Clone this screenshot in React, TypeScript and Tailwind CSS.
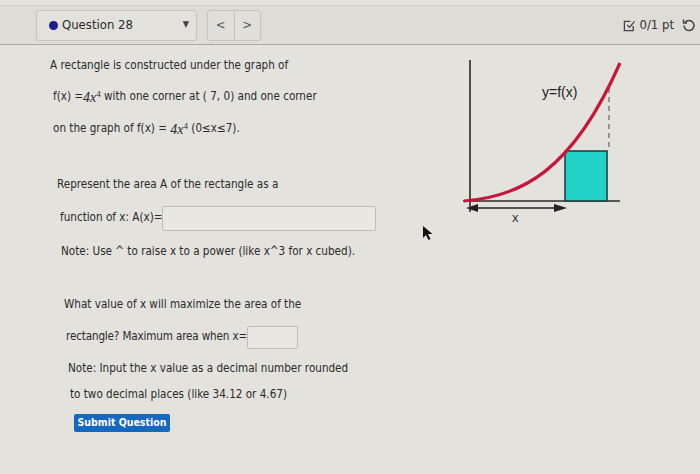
const font = "font-['DejaVu_Sans_Condensed','Liberation_Sans_Narrow','Liberation_Sans',sans-serif]";

function Graph() {
  return (
    <svg width="180" height="175" viewBox="0 0 180 175" className="shrink-0">
      {/* axes */}
      <line x1="20" y1="0" x2="20" y2="152" stroke="#2a2a2a" strokeWidth="1.6" />
      <line x1="13" y1="141" x2="170" y2="141" stroke="#2a2a2a" strokeWidth="1.4" />
      {/* rectangle */}
      <rect x="115" y="91" width="42" height="50" fill="#20d3c6" stroke="#1c3a3a" strokeWidth="1.5" />
      <line x1="159" y1="28" x2="159" y2="91" stroke="#444" strokeWidth="1" strokeDasharray="5 4" />
      {/* curve */}
      <path d="M14 141 C 70 137, 122 112, 170 3" fill="none" stroke="#c8163a" strokeWidth="3.2" />
      <text x="92" y="37" fontSize="14" fill="#222" fontFamily="Liberation Sans, Arial, sans-serif">y=f(x)</text>
      {/* x arrow */}
      <line x1="22" y1="148" x2="112" y2="148" stroke="#222" strokeWidth="1.3" />
      <polygon points="16,148 28,144 28,152" fill="#222" />
      <polygon points="117,148 104,144 104,152" fill="#222" />
      <text x="62" y="162" fontSize="13" fill="#333" fontFamily="Liberation Sans, Arial, sans-serif">x</text>
    </svg>
  );
}

function Math4x4() {
  return (
    <span className="font-['Liberation_Serif',serif] text-[14px] italic">
      4x<sup className="text-[9px] not-italic">4</sup>
    </span>
  );
}

const row = "flex h-[26px] items-center whitespace-nowrap";

export default function App() {
  return (
    <div className={`${font} h-[474px] w-[700px] overflow-hidden bg-[#e3e2dd] text-[11.6px] text-[#2a2a2a]`}>
      <header className="mt-[5px] flex h-[40px] items-center border-y border-t-[#cfcec9] border-b-[#a9a8a3] bg-[#dddcd7] pl-[36px] pr-[4px]">
        <div className="flex h-[31px] w-[161px] items-center rounded-[3px] border border-[#c4c3be] bg-[#e2e1dc] pl-[12px] pr-[7px]">
          <span className="h-[9px] w-[9px] rounded-full bg-[#1c1d8c]" />
          <span className="ml-[4px] text-[13px] text-[#2a2a2a]">Question 28</span>
          <span className="ml-auto text-[9px] text-[#444]">▼</span>
        </div>
        <div className="ml-[10px] flex h-[31px] w-[54px] rounded-[3px] border border-[#c4c3be] bg-[#e0dfda] text-[13px] text-[#555]">
          <span className="flex flex-1 items-center justify-center border-r border-[#c4c3be]">&lt;</span>
          <span className="flex flex-1 items-center justify-center">&gt;</span>
        </div>
        <div className="ml-auto flex items-center gap-[3px] text-[13px] text-[#333]">
          <svg width="13" height="13" viewBox="0 0 14 14" fill="none" stroke="#444" strokeWidth="1.4">
            <path d="M11 7.5V12.5H1.5V2.5H8" />
            <path d="M4.5 6.5L7 9L12.5 2.5" />
          </svg>
          <span>0/1 pt</span>
          <svg width="14" height="14" viewBox="0 0 14 14" fill="none" stroke="#444" strokeWidth="1.5" className="ml-[5px]">
            <path d="M3 4.5A5 5 0 1 1 2 7.5" />
            <path d="M1.5 1.5V5H5" />
          </svg>
        </div>
      </header>

      <div className="flex">
        <div className="w-[410px] shrink-0 pt-[8px]">
          <div className={`${row} ml-[50px]`}>A rectangle is constructed under the graph of</div>
          <div className={`${row} ml-[53px] mt-[5px]`}>
            f(x) =<Math4x4 />&nbsp;with one corner at ( 7, 0) and one corner
          </div>
          <div className={`${row} ml-[53px] mt-[6px]`}>
            on the graph of f(x) =&nbsp;<Math4x4 />&nbsp;(0≤x≤7).
          </div>

          <div className={`${row} ml-[57px] mt-[30px]`}>Represent the area A of the rectangle as a</div>
          <div className={`${row} ml-[60px] mt-[7px]`}>
            <span>function of x: A(x)=</span>
            <span className="h-[25px] w-[214px] rounded-[2px] border border-[#bdbcb7] bg-[#e8e7e2]" />
          </div>
          <div className={`${row} ml-[61px] mt-[8px]`}>Note: Use ^ to raise x to a power (like x^3 for x cubed).</div>

          <div className={`${row} ml-[64px] mt-[27px]`}>What value of x will maximize the area of the</div>
          <div className={`${row} ml-[66px] mt-[6px] tracking-[-0.15px]`}>
            <span>rectangle? Maximum area when x=</span>
            <span className="h-[23px] w-[51px] rounded-[2px] border border-[#bdbcb7] bg-[#e8e7e2]" />
          </div>
          <div className={`${row} ml-[68px] mt-[6px]`}>Note: Input the x value as a decimal number rounded</div>
          <div className={`${row} ml-[70px]`}>to two decimal places (like 34.12 or 4.67)</div>
          <div className={`${row} ml-[74px] mt-[2px]`}>
            <button className="h-[18px] w-[96px] whitespace-nowrap rounded-[2px] bg-[#1667c2] text-[10.5px] font-bold text-white">
              Submit Question
            </button>
          </div>
        </div>
        <div className="relative flex-1">
          <div className="ml-[40px] mt-[15px]">
            <Graph />
          </div>
          <svg width="12" height="16" viewBox="0 0 12 16" className="absolute left-[12px] top-[180px]">
            <path d="M1 1L1 13L4 10L6.5 15L8.5 14L6 9L10.5 9Z" fill="#111" />
          </svg>
        </div>
      </div>
    </div>
  );
}
